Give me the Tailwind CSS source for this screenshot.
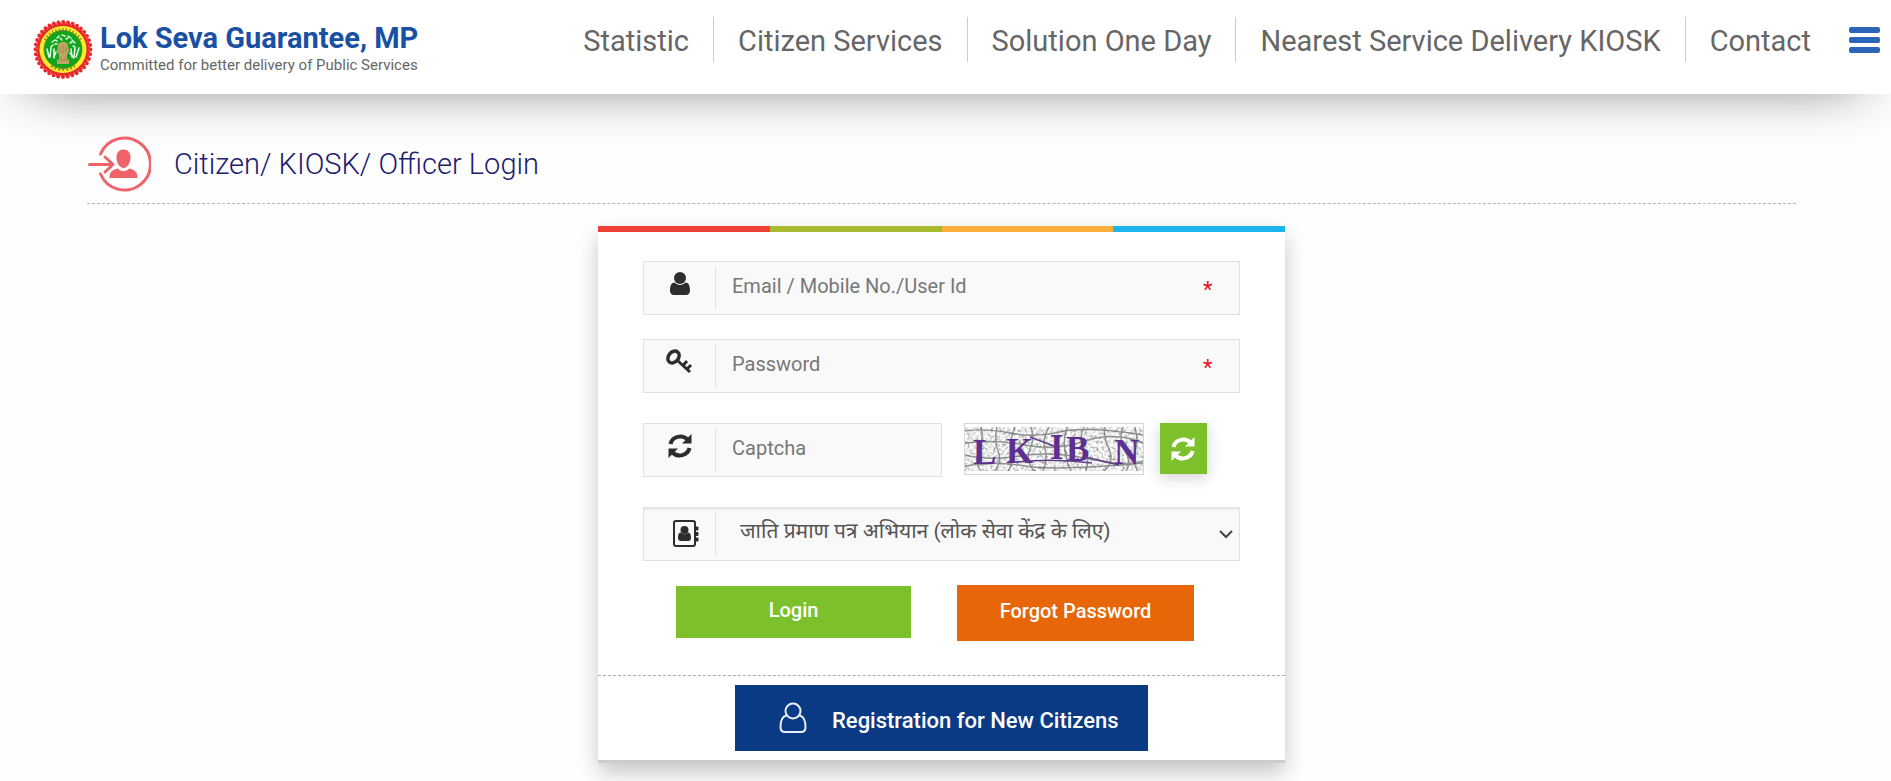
<!DOCTYPE html>
<html lang="en">

<head>
  <meta charset="UTF-8">
  <meta name="viewport" content="width=device-width, initial-scale=1.0">
  <title>Lok Seva Guarantee, MP</title>
  <script src="https://cdn.jsdelivr.net/npm/@tailwindcss/browser@4"></script>
</head>

<body class="min-h-screen overflow-x-hidden bg-[#fefefe] font-['Roboto','Noto_Sans',sans-serif]">
  <!-- Header -->
  <header class="flex h-[94px] items-start justify-between bg-white pl-[33px] pr-[11px] shadow-[0_12px_60px_-30px_rgba(0,0,0,0.85)]">
    <a href="#" class="flex items-start gap-[7px] pt-[18px]">
      <svg class="h-[63px] w-[60px]" viewBox="0 0 60 63" aria-hidden="true">
        <circle cx="30" cy="31.5" r="27" fill="#e92a2b" />
        <circle cx="30" cy="31.5" r="27.5" fill="none" stroke="#e92a2b" stroke-width="4" stroke-linecap="round" stroke-dasharray="0 4.8" />
        <circle cx="30" cy="31.5" r="26" fill="none" stroke="#f7a09a" stroke-width="1" stroke-dasharray="1 3.8" />
        <circle cx="30" cy="31.5" r="23.5" fill="#f6ee2c" />
        <path d="M12 22a20.500 20.500 0 0 1 36 0" fill="none" stroke="#a98a26" stroke-width="2.500" stroke-dasharray="1.500 2" />
        <path d="M18 48a20.500 20.500 0 0 0 24 0" fill="none" stroke="#a08022" stroke-width="2" stroke-dasharray="2 2" />
        <circle cx="30" cy="31.500" r="19" fill="#12a51c" stroke="#5d8f1c" />
        <path d="M19 24l3-2 2 1M24 20l2-2M29 17l3 1M35 18l3 2M39 22l3 3M18 29l2-2M40 28l2 1M27 20l2 2M33 21l2-1M22 26l2 0M37 25l2-1" stroke="#d8ffe0" stroke-width="1.500" fill="none" stroke-linecap="round" />
        <path d="M14 31l2 8M18 30l-1 9M21 31v9M23 34l-2 5M38 31l1 8M42 30l-1 9M46 30l-3 9M37 35l4 5" stroke="#e6fff0" stroke-width="1.500" fill="none" stroke-linecap="round" />
        <path d="M25 28q0-4 5-4t5 4l1 5-2 4v4l2 1v4H24v-4l2-1v-4l-2-4z" fill="#bfa463" />
        <path d="M27 29v6M30 27v9M33 29v6M25 42h10M28 38v3M32 38v3" stroke="#a08a52" stroke-width="1" />
      </svg>
      <span class="flex flex-col pt-1">
        <strong class="text-[29px] leading-8 font-bold text-[#1a50a3]">Lok Seva Guarantee, MP</strong>
        <span class="text-[15px] leading-[22px] text-[#666]">Committed for better delivery of Public Services</span>
      </span>
    </a>

    <div class="flex items-start pt-[17px]">
      <nav class="flex h-[45px] text-[29px] leading-[49px] text-[#666]">
        <a href="#" class="border-r border-[#ccc] px-6">Statistic</a>
        <a href="#" class="border-r border-[#ccc] px-6">Citizen Services</a>
        <a href="#" class="border-r border-[#ccc] px-6">Solution One Day</a>
        <a href="#" class="border-r border-[#ccc] px-6">Nearest Service Delivery KIOSK</a>
        <a href="#" class="px-6">Contact</a>
      </nav>
      <button type="button" aria-label="Menu" class="ml-[14px] flex flex-col gap-1 pt-[10px]">
        <span class="h-[6px] w-[31px] rounded-xs bg-[#2a66b8]"></span>
        <span class="h-[6px] w-[31px] rounded-xs bg-[#2a66b8]"></span>
        <span class="h-[6px] w-[31px] rounded-xs bg-[#2a66b8]"></span>
      </button>
    </div>
  </header>

  <main class="pr-[95px] pl-[87px]">
    <!-- Page title -->
    <div class="flex h-[110px] items-end gap-[23px] border-b border-dashed border-[#b5b5b5] pb-[10px]">
      <svg class="h-[58px] w-16" viewBox="0 0 64 58" fill="none" stroke="#f0626a" stroke-width="3" aria-hidden="true">
        <path d="M13.500 19A26 26 0 1 1 13.500 39" stroke-linecap="round" />
        <path d="M2.500 29.500H25M18 22l8 7.500-8 7.500" stroke-linecap="round" stroke-linejoin="round" />
        <path d="M36.500 14.500c4.500 0 7 3 7 8s-3 10.500-7 10.500-7-5.500-7-10.500 2.500-8 7-8z" fill="#f0626a" stroke="none" />
        <path d="M31 33.500c3 3.500 8 3.500 11 0 6 1.500 8.500 3 8.500 9.500h-28c0-6.500 2.500-8 8.500-9.500z" fill="#f0626a" stroke="none" />
      </svg>
      <h1 class="text-[29px] leading-[58px] font-light text-[#1c2070]">Citizen/ KIOSK/ Officer Login</h1>
    </div>

    <!-- Login card -->
    <div class="mx-auto mt-[22px] w-full max-w-[687px] border-b-[3px] border-[#ccc] bg-white shadow-[0_10px_20px_rgba(0,0,0,0.22)]">
      <div class="grid h-[6px] grid-cols-4">
        <span class="bg-[#ef4136]"></span>
        <span class="bg-[#a9ba2f]"></span>
        <span class="bg-[#fbae3a]"></span>
        <span class="bg-[#1cb4ea]"></span>
      </div>

      <form>
        <div class="px-[45px] pt-[29px]">
          <div class="flex h-[54px] border border-[#e1e1e1] bg-[#f9f9f9]">
            <label for="userId" aria-label="User Id" class="my-1 flex w-[72px] shrink-0 justify-center border-r border-[#e1e1e1] pt-1">
              <svg class="h-7 w-7" viewBox="0 0 28 28" fill="#2d2d2d">
                <circle cx="14" cy="8" r="6" />
                <path d="M8.500 12.500c3 3.300 8 3.300 11 0 3.500 0 4.500 4 4.500 8.500 0 2-1.500 4-4 4H8c-2.500 0-4-2-4-4 0-4.500 1-8.500 4.500-8.500z" />
              </svg>
            </label>
            <input id="userId" type="text" placeholder="Email / Mobile No./User Id" class="w-full min-w-0 bg-transparent pb-1 pl-4 text-[20px] text-[#333] outline-none placeholder:text-[#777]">
            <span class="w-[52px] shrink-0 pt-3 pl-4 text-[22px] leading-8 text-[#e8151c]">*</span>
          </div>

          <div class="mt-6 flex h-[54px] border border-[#e1e1e1] bg-[#f9f9f9]">
            <label for="password" aria-label="Password" class="my-1 flex w-[72px] shrink-0 justify-center border-r border-[#e1e1e1] pt-1">
              <svg class="h-7 w-7" viewBox="0 0 28 28" fill="none" stroke="#2d2d2d">
                <ellipse cx="7.500" cy="9" rx="6.500" ry="5" stroke-width="3.500" transform="rotate(-50 7.500 9)" />
                <path d="M11.500 12.500l12.500 11.500M17 17.500l4-4.500M21 21l4-4" stroke-width="3" />
              </svg>
            </label>
            <input id="password" type="password" placeholder="Password" class="w-full min-w-0 bg-transparent pb-1 pl-4 text-[20px] text-[#333] outline-none placeholder:text-[#777]">
            <span class="w-[52px] shrink-0 pt-3 pl-4 text-[22px] leading-8 text-[#e8151c]">*</span>
          </div>

          <div class="mt-[30px] flex items-start">
            <div class="flex h-[54px] w-1/2 border border-[#e1e1e1] bg-[#f9f9f9]">
              <label for="captcha" aria-label="Captcha" class="my-1 flex w-[72px] shrink-0 justify-center border-r border-[#e1e1e1] pt-1">
                <svg class="h-7 w-7" viewBox="0 0 28 28" fill="none" stroke="#2d2d2d" stroke-width="4">
                  <path d="M4.500 12a10 9.500 0 0 1 17-4.500" />
                  <path d="M25.500 2v9.500H16z" fill="#2d2d2d" stroke="none" />
                  <path d="M23.500 16a10 9.500 0 0 1-17 4.500" />
                  <path d="M2.500 26v-9.500H12z" fill="#2d2d2d" stroke="none" />
                </svg>
              </label>
              <input id="captcha" type="text" placeholder="Captcha" class="w-full min-w-0 bg-transparent pb-1 pl-4 text-[20px] text-[#333] outline-none placeholder:text-[#777]">
            </div>
            <svg class="ml-[22px] h-[52px] w-[180px] border border-[#d6d6d6] bg-white py-[3px]" viewBox="0 0 178 44" preserveAspectRatio="none" role="img" aria-label="Captcha image">
              <filter id="grain" x="0" y="0" width="100%" height="100%">
                <feTurbulence type="fractalNoise" baseFrequency="0.35" numOctaves="3" seed="7" />
                <feColorMatrix type="matrix" values="1.300 0.700 0 0 -0.170  1.300 0.700 0 0 -0.170  1.300 0.600 0.100 0 -0.170  0 0 0 0 1" />
              </filter>
              <rect width="178" height="44" fill="#d9d9d9" />
              <rect width="178" height="44" filter="url(#grain)" />
              <g fill="none" stroke="#66686a" stroke-width="1.500" opacity="0.7">
                <path d="M0 4q20-3 45 2t50-1 83 3M0 16q30-4 60 2t60-4 58 2M0 28q25 6 55 1t70 3 53 2M0 39q30-5 60 0t118-3" />
                <path d="M16 0q3 12-2 24t2 20M32 0q-3 14 1 24t-3 20M50 0q-6 14-4 26t-3 18M66 0q4 12-1 22t4 22M84 0q-7 12-4 22t-2 22M102 0q-4 12-2 24t6 20M119 0q-6 12 0 22t2 22M140 0q-2 10 4 22t-5 22M158 0q-5 12 2 24t1 20M170 0q4 14 0 24t3 20" />
              </g>
              <g fill="#5d2f91" font-family="'Liberation Serif', serif" font-weight="bold" font-size="35">
                <text x="8" y="37">L</text>
                <text x="41" y="36">K</text>
                <text x="85" y="32">I</text>
                <text x="101" y="34">B</text>
                <text x="149" y="37">N</text>
              </g>
              <path d="M65 10l24 9M52 35q35-4 75 1M120 30l34 8" fill="none" stroke="#5d3f86" stroke-width="1.500" />
            </svg>
            <button type="button" aria-label="Refresh captcha" class="ml-4 flex h-[51px] w-[47px] items-center justify-center bg-[#7cc12b] shadow-[0_4px_14px_rgba(0,0,0,0.18)]">
              <svg class="h-7 w-7" viewBox="0 0 28 28" fill="none" stroke="#fff" stroke-width="4">
                <path d="M4.500 12a10 9.500 0 0 1 17-4.500" />
                <path d="M25.500 2v9.500H16z" fill="#fff" stroke="none" />
                <path d="M23.500 16a10 9.500 0 0 1-17 4.500" />
                <path d="M2.500 26v-9.500H12z" fill="#fff" stroke="none" />
              </svg>
            </button>
          </div>

          <div class="relative mt-[30px] flex h-[54px] border border-[#e1e1e1] bg-[#f9f9f9] inset-shadow-[0_2px_2px_rgba(0,0,0,0.06)]">
            <label for="campaign" aria-label="Campaign" class="my-1 flex w-[72px] shrink-0 justify-center border-r border-[#e1e1e1] pt-2 pl-3">
              <svg class="h-7 w-7" viewBox="0 0 28 28" fill="none" stroke="#2d2d2d">
                <rect x="2" y="1" width="21" height="25" rx="2" stroke-width="2" />
                <path d="M23 7h3v3h-3M23 12.500h3v3h-3M23 18h3v3h-3" fill="#2d2d2d" stroke-width="1" />
                <circle cx="12.500" cy="10" r="4" fill="#2d2d2d" stroke="none" />
                <path d="M9 12.500c2 2.200 5 2.200 7 0 2.500 0 3 3 3 5.500 0 1.500-1 3-2.500 3h-8C7 21 6 19.500 6 18c0-2.500.5-5.500 3-5.500z" fill="#2d2d2d" stroke="none" />
              </svg>
            </label>
            <select id="campaign" class="w-full min-w-0 appearance-none bg-transparent pb-1 pl-6 text-[21px] text-[#555] outline-none">
              <option>जाति प्रमाण पत्र अभियान (लोक सेवा केंद्र के लिए)</option>
            </select>
            <svg class="pointer-events-none absolute top-5 right-[5px] h-3 w-4" viewBox="0 0 16 12" fill="none" stroke="#444" stroke-width="2">
              <path d="M2 3l6 6 6-6" />
            </svg>
          </div>

          <div class="mt-6 flex items-start justify-between pr-[46px] pl-[33px]">
            <button type="submit" class="mt-px h-[52px] w-[235px] bg-[#7cc12b] pb-1 text-[20px] font-medium text-white">Login</button>
            <button type="button" class="h-14 w-[237px] bg-[#e66608] pb-1 text-[20px] font-medium text-white">Forgot Password</button>
          </div>
        </div>

        <div class="mt-[34px] border-t border-dashed border-[#aaa] pt-[9px] pb-[9px]">
          <button type="button" class="mx-auto flex h-[66px] w-[413px] items-center bg-[#0b3a85] pl-[43px] text-[22px] font-medium text-white">
            <svg class="h-8 w-[30px]" viewBox="0 0 30 32" fill="none" stroke="#e9eefa" stroke-width="2">
              <circle cx="15" cy="9" r="7.500" />
              <path d="M8.500 13.500C4 14.500 2.500 20 2.500 25c0 3 1.500 5 4.500 5h16c3 0 4.500-2 4.500-5 0-5-1.500-10.500-6-11.500" />
            </svg>
            <span class="pt-1 pl-6">Registration for New Citizens</span>
          </button>
        </div>
      </form>
    </div>
  </main>
</body>

</html>
